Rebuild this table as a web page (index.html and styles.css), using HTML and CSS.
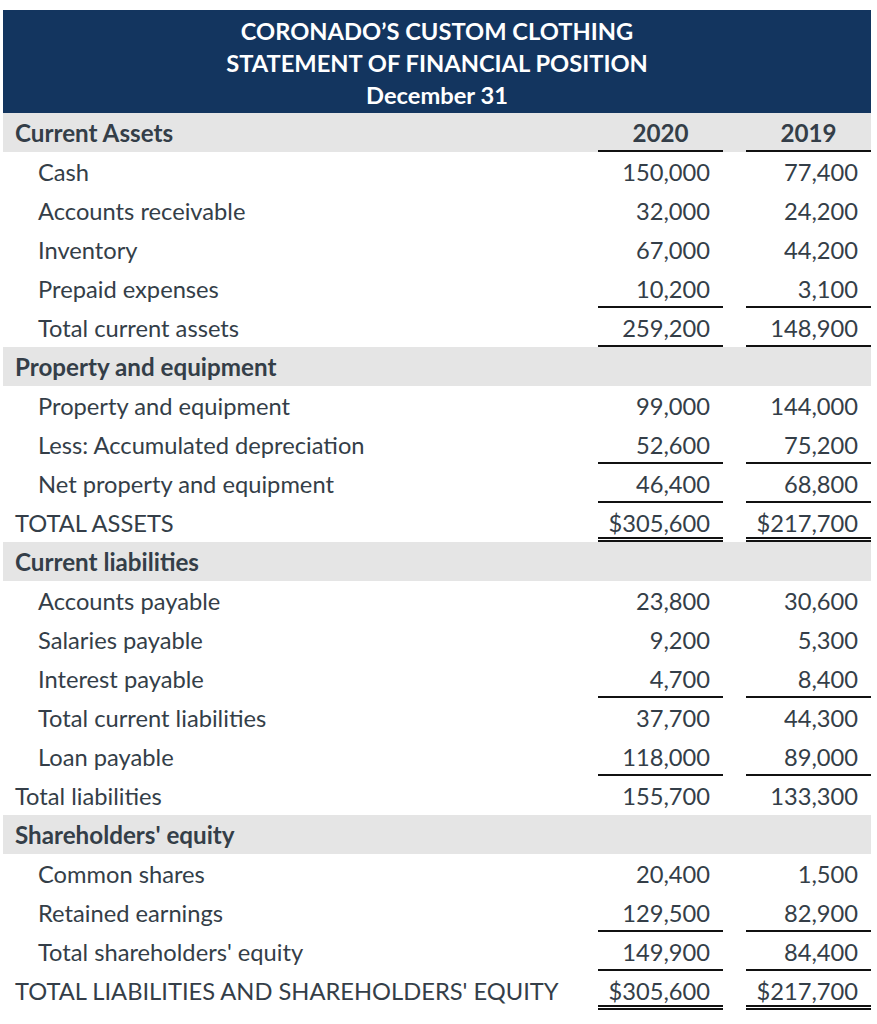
FILE: index.html
```html
<!DOCTYPE html>
<html lang="en">
<head>
<meta charset="utf-8">
<title>Coronado's Custom Clothing - Statement of Financial Position</title>
<link rel="stylesheet" href="styles.css">
</head>
<body>
<div class="statement">
  <div class="title">
    <div>CORONADO’S CUSTOM CLOTHING</div>
    <div>STATEMENT OF FINANCIAL POSITION</div>
    <div>December 31</div>
  </div>

  <div class="row section"><div class="label">Current Assets</div><div class="num year line">2020</div><div class="num year line">2019</div></div>
  <div class="row"><div class="label indent">Cash</div><div class="num">150,000</div><div class="num">77,400</div></div>
  <div class="row"><div class="label indent">Accounts receivable</div><div class="num">32,000</div><div class="num">24,200</div></div>
  <div class="row"><div class="label indent">Inventory</div><div class="num">67,000</div><div class="num">44,200</div></div>
  <div class="row"><div class="label indent">Prepaid expenses</div><div class="num line">10,200</div><div class="num line">3,100</div></div>
  <div class="row"><div class="label indent">Total current assets</div><div class="num line">259,200</div><div class="num line">148,900</div></div>

  <div class="row section"><div class="label">Property and equipment</div><div class="num"></div><div class="num"></div></div>
  <div class="row"><div class="label indent">Property and equipment</div><div class="num">99,000</div><div class="num">144,000</div></div>
  <div class="row"><div class="label indent">Less: Accumulated depreciation</div><div class="num line">52,600</div><div class="num line">75,200</div></div>
  <div class="row"><div class="label indent">Net property and equipment</div><div class="num line">46,400</div><div class="num line">68,800</div></div>
  <div class="row"><div class="label">TOTAL ASSETS</div><div class="num double">$305,600</div><div class="num double">$217,700</div></div>

  <div class="row section"><div class="label">Current liabilities</div><div class="num"></div><div class="num"></div></div>
  <div class="row"><div class="label indent">Accounts payable</div><div class="num">23,800</div><div class="num">30,600</div></div>
  <div class="row"><div class="label indent">Salaries payable</div><div class="num">9,200</div><div class="num">5,300</div></div>
  <div class="row"><div class="label indent">Interest payable</div><div class="num line">4,700</div><div class="num line">8,400</div></div>
  <div class="row"><div class="label indent">Total current liabilities</div><div class="num">37,700</div><div class="num">44,300</div></div>
  <div class="row"><div class="label indent">Loan payable</div><div class="num line">118,000</div><div class="num line">89,000</div></div>
  <div class="row"><div class="label">Total liabilities</div><div class="num">155,700</div><div class="num">133,300</div></div>

  <div class="row section"><div class="label">Shareholders' equity</div><div class="num"></div><div class="num"></div></div>
  <div class="row"><div class="label indent">Common shares</div><div class="num">20,400</div><div class="num">1,500</div></div>
  <div class="row"><div class="label indent">Retained earnings</div><div class="num line">129,500</div><div class="num line">82,900</div></div>
  <div class="row"><div class="label indent">Total shareholders' equity</div><div class="num line">149,900</div><div class="num line">84,400</div></div>
  <div class="row"><div class="label">TOTAL LIABILITIES AND SHAREHOLDERS' EQUITY</div><div class="num double">$305,600</div><div class="num double">$217,700</div></div>
</div>
</body>
</html>
```

FILE: styles.css
```css
html, body {
  margin: 0;
  padding: 0;
  background: #ffffff;
}

body {
  font-family: Lato, "Open Sans", "Liberation Sans", sans-serif;
  color: #343e48;
}

.statement {
  width: 868px;
  margin: 10px 0 0 3px;
}

.title {
  background: #13355f;
  color: #ffffff;
  font-weight: 700;
  font-size: 23.7px;
  line-height: 32px;
  text-align: center;
  padding: 5px 0 2px;
}

.row {
  display: grid;
  grid-template-columns: 1fr 125px 125px;
  column-gap: 23px;
  height: 39px;
  font-size: 23.7px;
}

.row.section {
  background: #e5e5e5;
  font-weight: 700;
  font-size: 24.2px;
}

.label,
.num {
  display: flex;
  align-items: center;
  box-sizing: border-box;
  height: 39px;
  white-space: nowrap;
}

.label {
  padding-left: 12px;
}

.label.indent {
  padding-left: 35px;
}

.num {
  justify-content: flex-end;
  padding-right: 13px;
}

.num.year {
  justify-content: center;
  padding-right: 0;
}

.num.line {
  border-bottom: 2px solid #111111;
  padding-top: 2px;
}

.num.double {
  border-bottom: 5px double #111111;
  padding-top: 5px;
}
```
